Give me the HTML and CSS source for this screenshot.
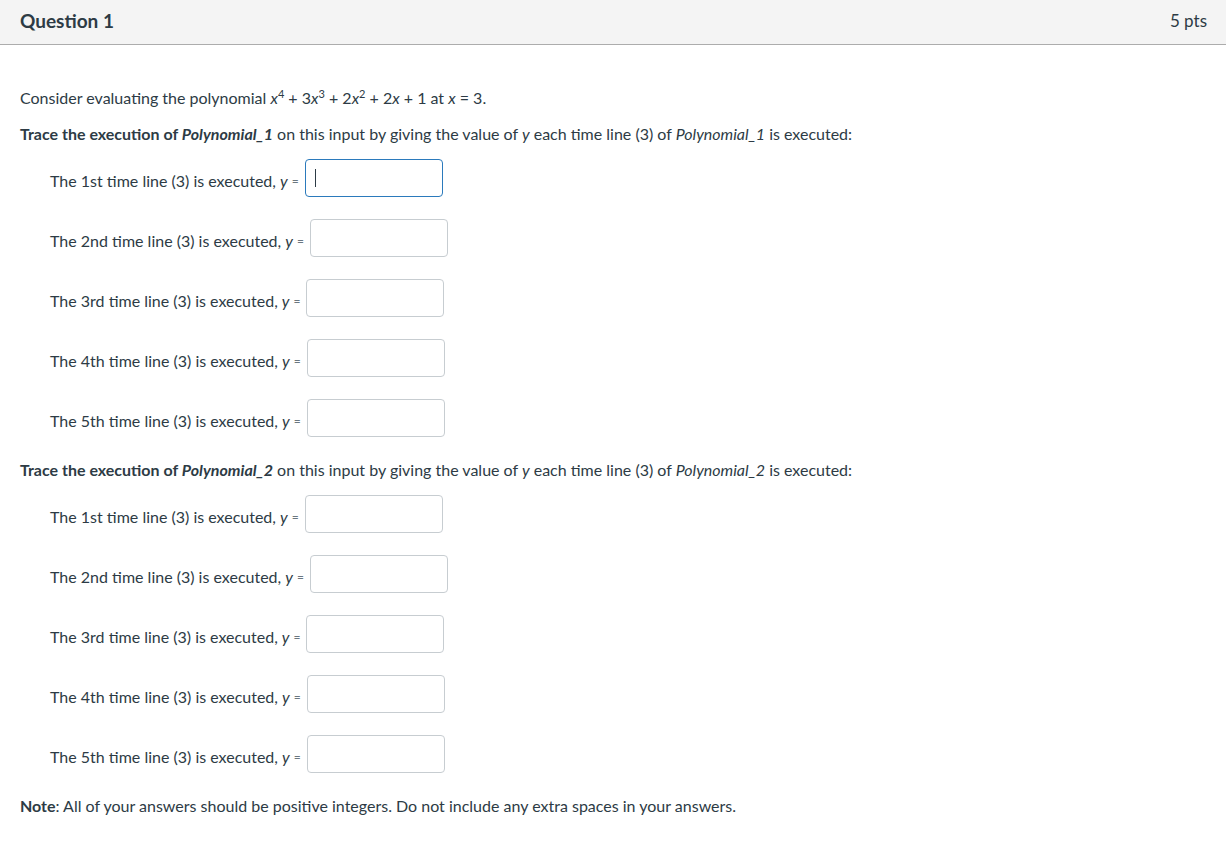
FILE: index.html
```html
<!DOCTYPE html>
<html lang="en">
<head>
    <meta charset="UTF-8">
    <title>Question 1</title>
    <link rel="stylesheet" href="styles.css">
</head>
<body>
    <div class="question">
        <div class="header">
            <span class="title">Question 1</span>
            <span class="points">5 pts</span>
        </div>
        <div class="question-text">
            <p>Consider evaluating the polynomial <i>x</i><sup>4</sup> + 3<i>x</i><sup>3</sup> + 2<i>x</i><sup>2</sup> + 2<i>x</i> + 1 at <i>x</i> = 3.</p>

            <p class="lead"><b>Trace the execution of <i>Polynomial_1</i></b> on this input by giving the value of <i>y</i> each time line (3) of <i>Polynomial_1</i> is executed:</p>
            <div class="rows">
                <div class="row">The 1st time line (3) is executed, <i class="var">y</i><span class="eq">=</span><span class="field focused"><input type="text"></span></div>
                <div class="row">The 2nd time line (3) is executed, <i class="var">y</i><span class="eq">=</span><span class="field"><input type="text"></span></div>
                <div class="row">The 3rd time line (3) is executed, <i class="var">y</i><span class="eq">=</span><span class="field"><input type="text"></span></div>
                <div class="row">The 4th time line (3) is executed, <i class="var">y</i><span class="eq">=</span><span class="field"><input type="text"></span></div>
                <div class="row">The 5th time line (3) is executed, <i class="var">y</i><span class="eq">=</span><span class="field"><input type="text"></span></div>
            </div>

            <p class="lead"><b>Trace the execution of <i>Polynomial_2</i></b> on this input by giving the value of <i>y</i> each time line (3) of <i>Polynomial_2</i> is executed:</p>
            <div class="rows">
                <div class="row">The 1st time line (3) is executed, <i class="var">y</i><span class="eq">=</span><span class="field"><input type="text"></span></div>
                <div class="row">The 2nd time line (3) is executed, <i class="var">y</i><span class="eq">=</span><span class="field"><input type="text"></span></div>
                <div class="row">The 3rd time line (3) is executed, <i class="var">y</i><span class="eq">=</span><span class="field"><input type="text"></span></div>
                <div class="row">The 4th time line (3) is executed, <i class="var">y</i><span class="eq">=</span><span class="field"><input type="text"></span></div>
                <div class="row">The 5th time line (3) is executed, <i class="var">y</i><span class="eq">=</span><span class="field"><input type="text"></span></div>
            </div>

            <p><b>Note</b>: All of your answers should be positive integers. Do not include any extra spaces in your answers.</p>
        </div>
    </div>
</body>
</html>
```

FILE: styles.css
```css
body {
    margin: 0;
    font-family: Lato, "Open Sans", sans-serif;
    color: #2d3b45;
    background-color: #fff;
}
.header {
    display: flex;
    justify-content: space-between;
    align-items: center;
    height: 40px;
    padding: 0 19px 4px 20px;
    background-color: #f4f4f4;
    border-bottom: 1px solid #acacac;
}
.title {
    font-size: 19px;
    font-weight: bold;
}
.points {
    font-size: 17px;
}
.question-text {
    padding: 42px 20px 20px;
    font-size: 16px;
    line-height: 22px;
}
.question-text p {
    margin: 0 0 14px;
}
.question-text p.lead {
    margin-bottom: 17px;
}
sup {
    font-size: 11px;
    line-height: 0;
    vertical-align: 6px;
}
.rows {
    display: flex;
    flex-direction: column;
    gap: 23px;
    padding-left: 30px;
    margin-bottom: 20px;
}
.row {
    display: flex;
    align-items: center;
    height: 37px;
}
.var {
    margin-left: 4px;
}
.eq {
    margin-left: 4px;
    font-size: 12px;
    color: #6b7780;
}
.field {
    position: relative;
    margin-left: 6px;
    margin-top: -5px;
}
.field input {
    display: block;
    width: 138px;
    height: 38px;
    box-sizing: border-box;
    border: 1px solid #c7cdd1;
    border-radius: 4px;
    background: #fff;
    padding: 0 10px;
    font: inherit;
    outline: none;
}
.field.focused input {
    border-color: #2b7abc;
}
.field.focused::after {
    content: "";
    position: absolute;
    left: 10px;
    top: 10px;
    width: 1px;
    height: 18px;
    background-color: #2d3b45;
}
```
